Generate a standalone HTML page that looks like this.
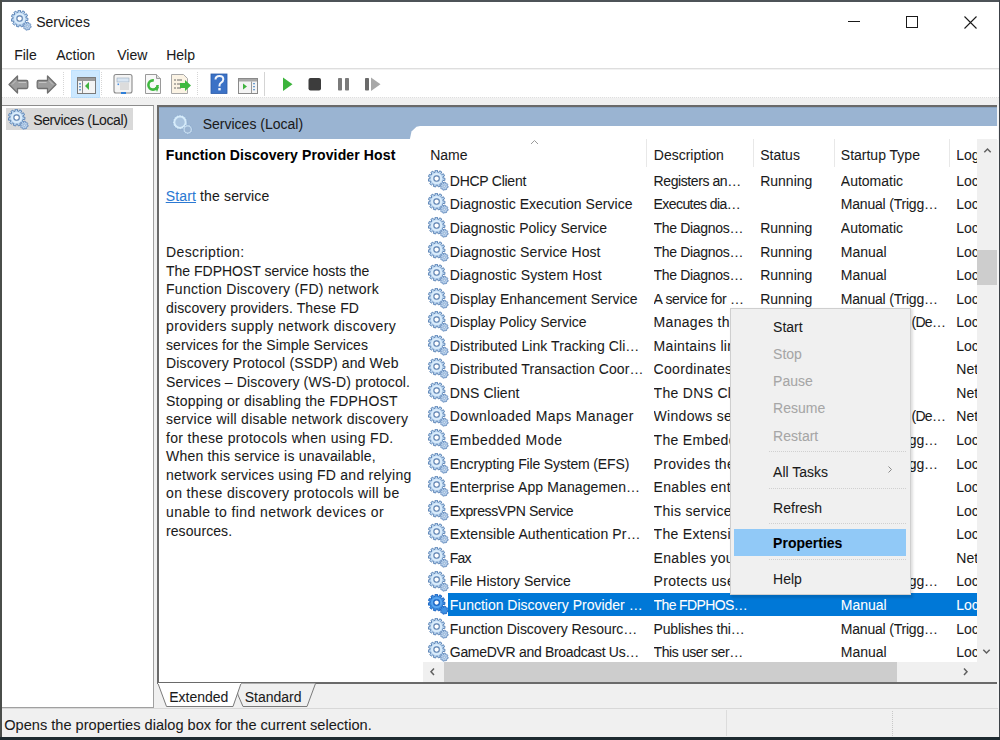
<!DOCTYPE html>
<html><head><meta charset="utf-8">
<style>
*{box-sizing:border-box}
html,body{margin:0;padding:0}
body{width:1000px;height:740px;overflow:hidden;position:relative;background:#1e2a30;font-family:"Liberation Sans",sans-serif;font-size:14px;color:#1a1a1a;-webkit-text-stroke:0.06px currentColor}
.a{position:absolute}
.t{position:absolute;white-space:nowrap;line-height:16px;margin-left:-0.8px}
.row{position:absolute;left:0;width:557px;height:23px}
.row .g{position:absolute;left:8.1px;top:1.2px}
.row span{position:absolute;top:4.1px;white-space:nowrap;line-height:16px}
.c1{left:29.8px}.c2{left:233.6px;width:98px;overflow:hidden}.c3{left:340.2px}.c4{left:420.8px;width:107px;overflow:hidden}.c5{left:536.3px}
.row.sel span{color:#fff}
.selbg{position:absolute;left:28px;top:0;width:529px;height:23px;background:#0078d7}
.dis{color:#a6a6a6}
.sep{position:absolute;left:769px;width:137px;height:1px;border-top:1px dotted #d0d0d0}
</style></head><body>
<svg width="0" height="0" style="position:absolute">
<defs>
<symbol id="gear" viewBox="0 0 21 21">
<path d="M15.17,8.02 16.99,8.24 16.75,10.62 14.93,10.48 14.45,11.66 15.85,12.83 14.37,14.71 12.91,13.60 11.86,14.34 12.41,16.08 10.15,16.86 9.52,15.14 8.24,15.19 7.76,16.96 5.44,16.38 5.84,14.60 4.74,13.95 3.38,15.18 1.73,13.44 3.04,12.15 2.46,11.01 0.65,11.31 0.21,8.96 2.00,8.58 2.13,7.31 0.45,6.58 1.35,4.37 3.06,5.02 3.85,4.01 2.83,2.49 4.79,1.12 5.88,2.59 7.09,2.18 7.05,0.34 9.44,0.24 9.56,2.07 10.80,2.38 11.76,0.82 13.82,2.02 12.94,3.62 13.82,4.56 15.47,3.76 16.55,5.89 14.94,6.76Z" fill="#bad5f0" stroke="#5f87b8" stroke-width="1" stroke-linejoin="round"/>
<circle cx="8.6" cy="8.6" r="4.6" fill="none" stroke="#dcedfb" stroke-width="1.8"/>
<circle cx="8.6" cy="8.6" r="2.7" fill="#fff" stroke="#6687b3" stroke-width="1.1"/>
<path d="M19.19,16.02 20.20,16.21 19.89,17.74 18.89,17.53 18.44,18.19 19.02,19.04 17.72,19.90 17.16,19.04 16.38,19.19 16.19,20.20 14.66,19.89 14.87,18.89 14.21,18.44 13.36,19.02 12.50,17.72 13.36,17.16 13.21,16.38 12.20,16.19 12.51,14.66 13.51,14.87 13.96,14.21 13.38,13.36 14.68,12.50 15.24,13.36 16.02,13.21 16.21,12.20 17.74,12.51 17.53,13.51 18.19,13.96 19.04,13.38 19.90,14.68 19.04,15.24Z" fill="#bcd4ee" stroke="#6b90bf" stroke-width="0.9" stroke-linejoin="round"/>
<circle cx="16.2" cy="16.2" r="1.2" fill="#e8f2fc" stroke="#6b90bf" stroke-width="0.6"/>
</symbol>
<symbol id="gearsel" viewBox="0 0 21 21">
<path d="M15.17,8.02 16.99,8.24 16.75,10.62 14.93,10.48 14.45,11.66 15.85,12.83 14.37,14.71 12.91,13.60 11.86,14.34 12.41,16.08 10.15,16.86 9.52,15.14 8.24,15.19 7.76,16.96 5.44,16.38 5.84,14.60 4.74,13.95 3.38,15.18 1.73,13.44 3.04,12.15 2.46,11.01 0.65,11.31 0.21,8.96 2.00,8.58 2.13,7.31 0.45,6.58 1.35,4.37 3.06,5.02 3.85,4.01 2.83,2.49 4.79,1.12 5.88,2.59 7.09,2.18 7.05,0.34 9.44,0.24 9.56,2.07 10.80,2.38 11.76,0.82 13.82,2.02 12.94,3.62 13.82,4.56 15.47,3.76 16.55,5.89 14.94,6.76Z" fill="#3b8de0" stroke="#1c66c4" stroke-width="1" stroke-linejoin="round"/>
<circle cx="8.6" cy="8.6" r="4.6" fill="none" stroke="#5aa6f0" stroke-width="1.8"/>
<circle cx="8.6" cy="8.6" r="2.8" fill="#fff" stroke="#1c66c4" stroke-width="1.3"/>
<path d="M19.19,16.02 20.20,16.21 19.89,17.74 18.89,17.53 18.44,18.19 19.02,19.04 17.72,19.90 17.16,19.04 16.38,19.19 16.19,20.20 14.66,19.89 14.87,18.89 14.21,18.44 13.36,19.02 12.50,17.72 13.36,17.16 13.21,16.38 12.20,16.19 12.51,14.66 13.51,14.87 13.96,14.21 13.38,13.36 14.68,12.50 15.24,13.36 16.02,13.21 16.21,12.20 17.74,12.51 17.53,13.51 18.19,13.96 19.04,13.38 19.90,14.68 19.04,15.24Z" fill="#3f92e4" stroke="#1c66c4" stroke-width="0.9" stroke-linejoin="round"/>
</symbol>
</defs>
</svg>

<!-- window frame -->
<div class="a" style="left:0;top:0;width:999px;height:737px;background:#f0f0f0"></div>
<div class="a" style="left:0;top:0;width:1000px;height:2px;background:#4d5358"></div>
<div class="a" style="left:0;top:0;width:2px;height:737px;background:#4a4d4a"></div>
<div class="a" style="left:998.8px;top:0;width:1.2px;height:740px;background:#3c4147"></div>
<!-- title bar + menu + toolbar white -->
<div class="a" style="left:2px;top:2px;width:997px;height:95px;background:#fff"></div>
<svg class="a" style="left:11px;top:10px" width="21" height="21"><use href="#gear"/></svg>
<div class="t" style="left:37px;top:13.8px">Services</div>
<div class="a" style="left:848px;top:21px;width:12px;height:1px;background:#1a1a1a"></div>
<div class="a" style="left:906px;top:16px;width:12px;height:12px;border:1px solid #1a1a1a"></div>
<svg class="a" style="left:963.5px;top:15.5px" width="13" height="13"><path d="M0.5 0.5L12.5 12.5M12.5 0.5L0.5 12.5" stroke="#1a1a1a" stroke-width="1.1"/></svg>
<!-- menu -->
<div class="t" style="left:15px;top:47.2px">File</div>
<div class="t" style="left:57px;top:47.2px">Action</div>
<div class="t" style="left:118px;top:47.2px">View</div>
<div class="t" style="left:167px;top:47.2px">Help</div>
<div class="a" style="left:2px;top:68px;width:997px;height:1px;background:#dedede"></div>
<div class="a" style="left:2px;top:69px;width:997px;height:1px;background:#f2f2f2"></div>
<!-- toolbar -->
<div class="a" style="left:2px;top:97px;width:997px;height:1px;background:#f8f8f8;border-top:1px dotted #dedede"></div>
<div class="a" style="left:2px;top:98px;width:997px;height:7px;background:#f0f0f0"></div>
<svg class="a" style="left:0;top:66px" width="400" height="40">
 <!-- back -->
 <path d="M9 18.5 L17.5 10 L17.5 14.5 L26.5 14.5 Q27.8 14.5 27.8 16 L27.8 21 Q27.8 22.5 26.5 22.5 L17.5 22.5 L17.5 27Z" fill="#9d9d9d" stroke="#707070" stroke-width="1.3" stroke-linejoin="round"/><path d="M12 18.5 L16 14.5 M18.5 16.5 L26 16.5" stroke="#c4c4c4" stroke-width="1"/>
 <!-- fwd -->
 <path d="M56 18.5 L47.5 10 L47.5 14.5 L38.5 14.5 Q37.2 14.5 37.2 16 L37.2 21 Q37.2 22.5 38.5 22.5 L47.5 22.5 L47.5 27Z" fill="#9d9d9d" stroke="#707070" stroke-width="1.3" stroke-linejoin="round"/><path d="M39 16.5 L46.5 16.5 M49 14.5 L53 18.5" stroke="#c4c4c4" stroke-width="1"/>
 <line x1="63.5" y1="6" x2="63.5" y2="30" stroke="#d6d6d6" stroke-dasharray="1 1"/>
 <!-- selected button -->
 <rect x="71.5" y="4.5" width="28" height="27" fill="#cce8ff" stroke="#99d1ff" stroke-dasharray="1 1"/>
 <rect x="77.5" y="11.5" width="18" height="16" fill="#f4f4f4" stroke="#7a7a7a"/>
 <rect x="78" y="12" width="17" height="3" fill="#9a9a9a"/>
 <line x1="82.5" y1="15" x2="82.5" y2="27" stroke="#8a8a8a"/>
 <rect x="79" y="17" width="2" height="1.5" fill="#6f9fd0"/><rect x="79" y="20" width="2" height="1.5" fill="#6f9fd0"/><rect x="79" y="23" width="2" height="1.5" fill="#6f9fd0"/>
 <path d="M89 16 L85 20 L89 24Z" fill="#3fb33f"/>
 <line x1="101.5" y1="6" x2="101.5" y2="30" stroke="#d6d6d6" stroke-dasharray="1 1"/>
 <!-- properties -->
 <rect x="114" y="8.5" width="18" height="18.5" rx="2" fill="#f4f4f4" stroke="#8a8a8a" stroke-width="1.1"/>
 <rect x="117" y="12" width="12" height="4" fill="#d9e6f3" stroke="#9ab" stroke-width="0.6"/>
 <rect x="120" y="17" width="9" height="7" fill="#dcdcdc"/>
 <rect x="117.5" y="17.5" width="1.6" height="1.6" fill="#4a90e2"/>
 <rect x="121" y="26" width="5" height="2" fill="#2f7fd8"/>
 <!-- refresh doc -->
 <path d="M145.5 8.5 L156.5 8.5 L160.5 12.5 L160.5 27.5 L145.5 27.5Z" fill="#f8f8f8" stroke="#9a9a9a"/>
 <path d="M156.5 8.5 L156.5 12.5 L160.5 12.5" fill="#e0e0e0" stroke="#9a9a9a"/>
 <circle cx="153" cy="19" r="4.6" fill="none" stroke="#3fb83f" stroke-width="2.6" stroke-dasharray="22 8"/>
 <path d="M155 21 L159 21 L157 26Z" fill="#3fb83f"/>
 <!-- export doc -->
 <path d="M171.5 8.5 L183.5 8.5 L187.5 12.5 L187.5 27.5 L171.5 27.5Z" fill="#fbf3e4" stroke="#a8a8a8"/>
 <path d="M174 14h2M177 14h5M174 18h2M177 18h5M174 22h2M177 22h4" stroke="#6a6a6a" stroke-width="1"/>
 <path d="M180 17 L185 17 L185 14 L191 19.5 L185 25 L185 22 L180 22Z" fill="#3fb83f"/>
 <line x1="197.5" y1="6" x2="197.5" y2="30" stroke="#d6d6d6" stroke-dasharray="1 1"/>
 <!-- help -->
 <rect x="211" y="8" width="16" height="19.5" fill="#3b72c6" stroke="#2a5aa8" stroke-width="0.8"/>
 <path d="M215.5 13.5 Q215.5 10 219.5 10 Q223.3 10 223.3 13.3 Q223.3 15.5 220.8 16.8 Q219.5 17.5 219.5 19.5 L219.5 20.5" fill="none" stroke="#f2f6fc" stroke-width="2"/>
 <rect x="218.3" y="22" width="2.4" height="2.4" fill="#f2f6fc"/>
 <!-- window icon -->
 <rect x="238.5" y="12.5" width="19" height="15" fill="#f4f4f4" stroke="#8a8a8a"/>
 <rect x="239" y="13" width="18" height="2.5" fill="#a8a8a8"/>
 <line x1="251.5" y1="15.5" x2="251.5" y2="27" stroke="#9a9a9a"/>
 <path d="M243 17.5 L247 20.5 L243 23.5Z" fill="#3fb33f"/>
 <rect x="253" y="17" width="2" height="1.3" fill="#6f9fd0"/><rect x="253" y="20" width="2" height="1.3" fill="#6f9fd0"/><rect x="253" y="23" width="2" height="1.3" fill="#6f9fd0"/>
 <line x1="264.5" y1="6" x2="264.5" y2="30" stroke="#d4d4d4"/>
 <!-- play -->
 <path d="M283 11.5 L292.5 18.3 L283 25Z" fill="#3cb43c"/>
 <!-- stop -->
 <rect x="308.5" y="12" width="12.5" height="12.5" rx="2" fill="#3c3c3c"/>
 <!-- pause -->
 <rect x="338" y="12" width="4" height="12.5" rx="0.8" fill="#7a7a7a"/>
 <rect x="345" y="12" width="4" height="12.5" rx="0.8" fill="#7a7a7a"/>
 <!-- resume -->
 <rect x="365" y="12" width="4" height="12.5" rx="0.8" fill="#6a6a6a"/>
 <path d="M371 11.5 L380.5 18.3 L371 25Z" fill="#a8a8a8"/>
</svg>

<!-- pane area bg -->
<div class="a" style="left:2px;top:105px;width:996px;height:603px;background:#f0f0f0"></div>
<!-- left pane -->
<div class="a" style="left:2px;top:105px;width:152px;height:603px;background:#fff;border-top:1px solid #8c8c8c;border-right:1px solid #a0a0a0;border-bottom:1px solid #a0a0a0"></div>
<div class="a" style="left:6px;top:108px;width:127px;height:22px;background:#d9d9d9"></div>
<svg class="a" style="left:8px;top:108.5px" width="21" height="21"><use href="#gear"/></svg>
<div class="t" style="left:34px;top:112px;letter-spacing:-0.38px">Services (Local)</div>

<!-- right pane -->
<div class="a" style="left:157px;top:105px;width:840px;height:579px;background:#fff;border-top:2px solid #6a6a6a;border-left:2px solid #6a6a6a;border-bottom:2px solid #6a6a6a"></div>
<div class="a" style="left:159px;top:107px;width:838px;height:31.5px;background:#9ab4d2;border-top:1px solid #8aa3c0"></div>
<div class="a" style="left:997px;top:105px;width:2px;height:603px;background:#f4f4f4"></div>
<svg class="a" style="left:170px;top:112px" width="24" height="24">
 <circle cx="10" cy="10.2" r="6.9" fill="#b8d2ea" opacity="0.5"/>
 <circle cx="10" cy="10.2" r="5.8" fill="none" stroke="#d6ebfa" stroke-width="2.2"/>
 <circle cx="10" cy="10.2" r="7" fill="none" stroke="#7ea2c9" stroke-width="0.8" stroke-dasharray="1.2 1.6" opacity="0.8"/>
 <circle cx="17.7" cy="17.5" r="3.7" fill="none" stroke="#c6dcef" stroke-width="1.4"/>
 <circle cx="17.7" cy="17.5" r="4.6" fill="none" stroke="#7ea2c9" stroke-width="0.8" stroke-dasharray="1.2 1.4" opacity="0.8"/>
</svg>
<div class="t" style="left:203.5px;top:115.7px">Services (Local)</div>
<svg class="a" style="left:400px;top:124px" width="598" height="16"><path d="M10 14.5 L11.5 7.5 L16.5 2.8 L20 2 L598 2 L598 16 L10 16Z" fill="#fff"/></svg>

<!-- description panel -->
<div class="t" style="left:166.5px;top:147px;font-weight:bold;color:#000;letter-spacing:0.13px">Function Discovery Provider Host</div>
<div class="t" style="left:166.5px;top:187.7px;letter-spacing:0.15px"><span style="color:#2b79d3;text-decoration:underline">Start</span> the service</div>
<div class="t" style="left:166.8px;top:243.95px;letter-spacing:0.382px">Description:</div>
<div class="t" style="left:166.8px;top:262.52px;letter-spacing:-0.007px">The FDPHOST service hosts the</div>
<div class="t" style="left:166.8px;top:281.09px;letter-spacing:0.297px">Function Discovery (FD) network</div>
<div class="t" style="left:166.8px;top:299.66px;letter-spacing:0.121px">discovery providers. These FD</div>
<div class="t" style="left:166.8px;top:318.23px;letter-spacing:0.358px">providers supply network discovery</div>
<div class="t" style="left:166.8px;top:336.80px;letter-spacing:0.087px">services for the Simple Services</div>
<div class="t" style="left:166.8px;top:355.37px;letter-spacing:0.147px">Discovery Protocol (SSDP) and Web</div>
<div class="t" style="left:166.8px;top:373.94px;letter-spacing:0.144px">Services – Discovery (WS-D) protocol.</div>
<div class="t" style="left:166.8px;top:392.51px;letter-spacing:0.209px">Stopping or disabling the FDPHOST</div>
<div class="t" style="left:166.8px;top:411.08px;letter-spacing:0.273px">service will disable network discovery</div>
<div class="t" style="left:166.8px;top:429.65px;letter-spacing:0.330px">for these protocols when using FD.</div>
<div class="t" style="left:166.8px;top:448.22px;letter-spacing:0.206px">When this service is unavailable,</div>
<div class="t" style="left:166.8px;top:466.79px;letter-spacing:0.242px">network services using FD and relying</div>
<div class="t" style="left:166.8px;top:485.36px;letter-spacing:0.371px">on these discovery protocols will be</div>
<div class="t" style="left:166.8px;top:503.93px;letter-spacing:0.403px">unable to find network devices or</div>
<div class="t" style="left:166.8px;top:522.50px;letter-spacing:0.078px">resources.</div>

<!-- list header -->
<div class="t" style="left:431px;top:146.8px">Name</div>
<div class="t" style="left:654.6px;top:146.8px">Description</div>
<div class="t" style="left:761px;top:146.8px">Status</div>
<div class="t" style="left:841.6px;top:146.8px">Startup Type</div>
<div class="a" style="left:957px;top:139px;width:20px;height:28px;overflow:hidden"><div class="t" style="left:0;top:7.8px">Log</div></div>
<svg class="a" style="left:530px;top:139px" width="10" height="6"><path d="M1 5L4.5 1.5L8 5" fill="none" stroke="#9a9a9a" stroke-width="1"/></svg>
<div class="a" style="left:646px;top:139px;width:1px;height:28px;background:#e8e8e8"></div>
<div class="a" style="left:752.5px;top:139px;width:1px;height:28px;background:#e8e8e8"></div>
<div class="a" style="left:833.5px;top:139px;width:1px;height:28px;background:#e8e8e8"></div>
<div class="a" style="left:949px;top:139px;width:1px;height:28px;background:#e8e8e8"></div>

<!-- rows -->
<div class="a" style="left:420px;top:167px;width:557px;height:494.7px;overflow:hidden">
 <div class="a" style="left:0;top:-167px;width:557px;height:700px">
<div class="row" style="top:168.70px"><svg class="g" width="21" height="21"><use href="#gear"/></svg><span class="c1" style="letter-spacing:-0.260px">DHCP Client</span><span class="c2" style="letter-spacing:-0.417px">Registers an…</span><span class="c3">Running</span><span class="c4" style="letter-spacing:0px">Automatic</span><span class="c5">Local System</span></div>
<div class="row" style="top:192.27px"><svg class="g" width="21" height="21"><use href="#gear"/></svg><span class="c1" style="letter-spacing:0.056px">Diagnostic Execution Service</span><span class="c2" style="letter-spacing:-0.583px">Executes dia…</span><span class="c3"></span><span class="c4" style="letter-spacing:-0.2px">Manual (Trigg…</span><span class="c5">Local System</span></div>
<div class="row" style="top:215.84px"><svg class="g" width="21" height="21"><use href="#gear"/></svg><span class="c1" style="letter-spacing:0.008px">Diagnostic Policy Service</span><span class="c2" style="letter-spacing:-0.327px">The Diagnos…</span><span class="c3">Running</span><span class="c4" style="letter-spacing:0px">Automatic</span><span class="c5">Local System</span></div>
<div class="row" style="top:239.41px"><svg class="g" width="21" height="21"><use href="#gear"/></svg><span class="c1" style="letter-spacing:0.095px">Diagnostic Service Host</span><span class="c2" style="letter-spacing:-0.327px">The Diagnos…</span><span class="c3">Running</span><span class="c4" style="letter-spacing:0px">Manual</span><span class="c5">Local System</span></div>
<div class="row" style="top:262.98px"><svg class="g" width="21" height="21"><use href="#gear"/></svg><span class="c1" style="letter-spacing:0.152px">Diagnostic System Host</span><span class="c2" style="letter-spacing:-0.327px">The Diagnos…</span><span class="c3">Running</span><span class="c4" style="letter-spacing:0px">Manual</span><span class="c5">Local System</span></div>
<div class="row" style="top:286.55px"><svg class="g" width="21" height="21"><use href="#gear"/></svg><span class="c1" style="letter-spacing:0.038px">Display Enhancement Service</span><span class="c2" style="letter-spacing:-0.329px">A service for …</span><span class="c3">Running</span><span class="c4" style="letter-spacing:-0.2px">Manual (Trigg…</span><span class="c5">Local System</span></div>
<div class="row" style="top:310.12px"><svg class="g" width="21" height="21"><use href="#gear"/></svg><span class="c1" style="letter-spacing:-0.043px">Display Policy Service</span><span class="c2" style="letter-spacing:0.300px">Manages the connection and configuration</span><span class="c3"></span><span class="c4">Automatic</span><span style="left:491.5px;letter-spacing:-0.7px">(De…</span><span class="c5">Local System</span></div>
<div class="row" style="top:333.69px"><svg class="g" width="21" height="21"><use href="#gear"/></svg><span class="c1" style="letter-spacing:0.069px">Distributed Link Tracking Cli…</span><span class="c2" style="letter-spacing:0.300px">Maintains links between NTFS files</span><span class="c3"></span><span class="c4" style="letter-spacing:0px">Manual</span><span class="c5">Local System</span></div>
<div class="row" style="top:357.26px"><svg class="g" width="21" height="21"><use href="#gear"/></svg><span class="c1" style="letter-spacing:0.079px">Distributed Transaction Coor…</span><span class="c2" style="letter-spacing:0.300px">Coordinates transactions that span</span><span class="c3"></span><span class="c4" style="letter-spacing:0px">Manual</span><span class="c5">Network Service</span></div>
<div class="row" style="top:380.83px"><svg class="g" width="21" height="21"><use href="#gear"/></svg><span class="c1" style="letter-spacing:0.033px">DNS Client</span><span class="c2" style="letter-spacing:0.300px">The DNS Client service caches</span><span class="c3"></span><span class="c4" style="letter-spacing:0px">Automatic</span><span class="c5">Network Service</span></div>
<div class="row" style="top:404.40px"><svg class="g" width="21" height="21"><use href="#gear"/></svg><span class="c1" style="letter-spacing:0.386px">Downloaded Maps Manager</span><span class="c2" style="letter-spacing:0.300px">Windows service for application</span><span class="c3"></span><span class="c4">Automatic</span><span style="left:491.5px;letter-spacing:-0.7px">(De…</span><span class="c5">Network Service</span></div>
<div class="row" style="top:427.97px"><svg class="g" width="21" height="21"><use href="#gear"/></svg><span class="c1" style="letter-spacing:0.458px">Embedded Mode</span><span class="c2" style="letter-spacing:0.300px">The Embedded Mode service enables</span><span class="c3"></span><span class="c4" style="letter-spacing:-0.2px">Manual (Trigg…</span><span class="c5">Local System</span></div>
<div class="row" style="top:451.54px"><svg class="g" width="21" height="21"><use href="#gear"/></svg><span class="c1" style="letter-spacing:-0.152px">Encrypting File System (EFS)</span><span class="c2" style="letter-spacing:0.300px">Provides the core file encryption</span><span class="c3"></span><span class="c4" style="letter-spacing:-0.2px">Manual (Trigg…</span><span class="c5">Local System</span></div>
<div class="row" style="top:475.11px"><svg class="g" width="21" height="21"><use href="#gear"/></svg><span class="c1" style="letter-spacing:0.113px">Enterprise App Managemen…</span><span class="c2" style="letter-spacing:0.300px">Enables enterprise application</span><span class="c3"></span><span class="c4" style="letter-spacing:0px">Manual</span><span class="c5">Local System</span></div>
<div class="row" style="top:498.68px"><svg class="g" width="21" height="21"><use href="#gear"/></svg><span class="c1" style="letter-spacing:-0.359px">ExpressVPN Service</span><span class="c2" style="letter-spacing:0.300px">This service is used to connect</span><span class="c3"></span><span class="c4" style="letter-spacing:0px">Automatic</span><span class="c5">Local System</span></div>
<div class="row" style="top:522.25px"><svg class="g" width="21" height="21"><use href="#gear"/></svg><span class="c1" style="letter-spacing:0.082px">Extensible Authentication Pr…</span><span class="c2" style="letter-spacing:0.300px">The Extensible Authentication</span><span class="c3"></span><span class="c4" style="letter-spacing:0px">Manual</span><span class="c5">Local System</span></div>
<div class="row" style="top:545.82px"><svg class="g" width="21" height="21"><use href="#gear"/></svg><span class="c1" style="letter-spacing:-0.800px">Fax</span><span class="c2" style="letter-spacing:0.300px">Enables you to send and receive</span><span class="c3"></span><span class="c4" style="letter-spacing:0px">Manual</span><span class="c5">Network Service</span></div>
<div class="row" style="top:569.39px"><svg class="g" width="21" height="21"><use href="#gear"/></svg><span class="c1" style="letter-spacing:0.016px">File History Service</span><span class="c2" style="letter-spacing:0.300px">Protects user files from accidental</span><span class="c3"></span><span class="c4" style="letter-spacing:-0.2px">Manual (Trigg…</span><span class="c5">Local System</span></div>
<div class="row sel" style="top:592.96px"><div class="selbg"></div><svg class="g" width="21" height="21"><use href="#gearsel"/></svg><span class="c1" style="letter-spacing:-0.004px">Function Discovery Provider …</span><span class="c2" style="letter-spacing:-0.630px">The FDPHOS…</span><span class="c3"></span><span class="c4" style="letter-spacing:0px">Manual</span><span class="c5">Local System</span></div>
<div class="row" style="top:616.53px"><svg class="g" width="21" height="21"><use href="#gear"/></svg><span class="c1" style="letter-spacing:-0.062px">Function Discovery Resourc…</span><span class="c2" style="letter-spacing:-0.177px">Publishes thi…</span><span class="c3"></span><span class="c4" style="letter-spacing:-0.2px">Manual (Trigg…</span><span class="c5">Local System</span></div>
<div class="row" style="top:640.10px"><svg class="g" width="21" height="21"><use href="#gear"/></svg><span class="c1" style="letter-spacing:-0.304px">GameDVR and Broadcast Us…</span><span class="c2" style="letter-spacing:-0.408px">This user ser…</span><span class="c3"></span><span class="c4" style="letter-spacing:0px">Manual</span><span class="c5">Local System</span></div>
 </div>
</div>

<!-- vertical scrollbar -->
<div class="a" style="left:977px;top:139px;width:20px;height:543px;background:#f0f0f0"></div>
<div class="a" style="left:977px;top:249.7px;width:20px;height:35.5px;background:#cdcdcd"></div>
<svg class="a" style="left:982.5px;top:147px" width="10" height="7"><path d="M1.3 5.2L4.5 2L7.7 5.2" fill="none" stroke="#606060" stroke-width="1.5"/></svg>
<svg class="a" style="left:982px;top:647.5px" width="10" height="7"><path d="M1.3 1.8L4.5 5L7.7 1.8" fill="none" stroke="#606060" stroke-width="1.5"/></svg>
<!-- horizontal scrollbar -->
<div class="a" style="left:422.7px;top:661.7px;width:554.3px;height:20.3px;background:#f0f0f0"></div>
<div class="a" style="left:444.2px;top:661.7px;width:452.4px;height:20.3px;background:#cdcdcd"></div>
<svg class="a" style="left:429px;top:667px" width="7" height="10"><path d="M5 1.5L2 4.7L5 7.9" fill="none" stroke="#606060" stroke-width="1.5"/></svg>
<svg class="a" style="left:962px;top:667px" width="7" height="10"><path d="M2 1.5L5 4.7L2 7.9" fill="none" stroke="#606060" stroke-width="1.5"/></svg>

<!-- tabs -->
<svg class="a" style="left:150px;top:683px" width="180" height="26">
 <path d="M85.5 0.5 L88 12 L93 23.5 L157 23.5 L165.5 0.5" fill="#f0f0f0" stroke="#7a7a7a" stroke-width="1"/>
 <path d="M8 0.5 L16.5 23.5 L83 23.5 L91 0.5Z" fill="#fff" stroke="#7a7a7a" stroke-width="1"/>
 <line x1="8" y1="0.5" x2="91" y2="0.5" stroke="#fff" stroke-width="1.2"/>
</svg>
<div class="t" style="left:170px;top:688.5px">Extended</div>
<div class="t" style="left:245.5px;top:688.5px">Standard</div>

<!-- status bar -->
<div class="a" style="left:2px;top:708px;width:996px;height:29px;background:#f0f0f0"></div>
<div class="a" style="left:2px;top:708px;width:996px;height:1px;background:#d8d8d8"></div>
<div class="t" style="left:5px;top:716.6px;font-size:14.6px">Opens the properties dialog box for the current selection.</div>
<div class="a" style="left:726px;top:710px;width:1px;height:26px;background:#dcdcdc"></div>
<div class="a" style="left:892px;top:711px;width:1px;height:25px;border-left:1px dotted #c8c8c8"></div>
<div class="a" style="left:0;top:737px;width:1000px;height:3px;background:#1e2a30"></div>

<!-- context menu -->
<div class="a" style="left:731px;top:309px;width:182px;height:289px;background:rgba(0,0,0,0.12);filter:blur(1px)"></div>
<div class="a" style="left:730px;top:308px;width:181px;height:287px;background:#f0f0f0;border:1px solid #cfcfcf"></div>
<div class="t" style="left:773.9px;top:318.6px">Start</div>
<div class="t dis" style="left:773.9px;top:346px">Stop</div>
<div class="t dis" style="left:773.9px;top:373.1px">Pause</div>
<div class="t dis" style="left:773.9px;top:400.3px">Resume</div>
<div class="t dis" style="left:773.9px;top:427.6px">Restart</div>
<div class="sep" style="top:451px"></div>
<div class="t" style="left:773.9px;top:463.5px">All Tasks</div>
<svg class="a" style="left:887px;top:465px" width="6" height="9"><path d="M1.5 1.5L4.5 4.5L1.5 7.5" fill="none" stroke="#8a8a8a" stroke-width="1"/></svg>
<div class="sep" style="top:487.5px"></div>
<div class="t" style="left:773.9px;top:500px">Refresh</div>
<div class="sep" style="top:522.7px"></div>
<div class="a" style="left:734px;top:529px;width:172px;height:27px;background:#91c9f7"></div>
<div class="t" style="left:773.9px;top:534.9px;font-weight:bold;color:#000">Properties</div>
<div class="sep" style="top:558.8px"></div>
<div class="t" style="left:773.9px;top:571.4px">Help</div>
</body></html>
